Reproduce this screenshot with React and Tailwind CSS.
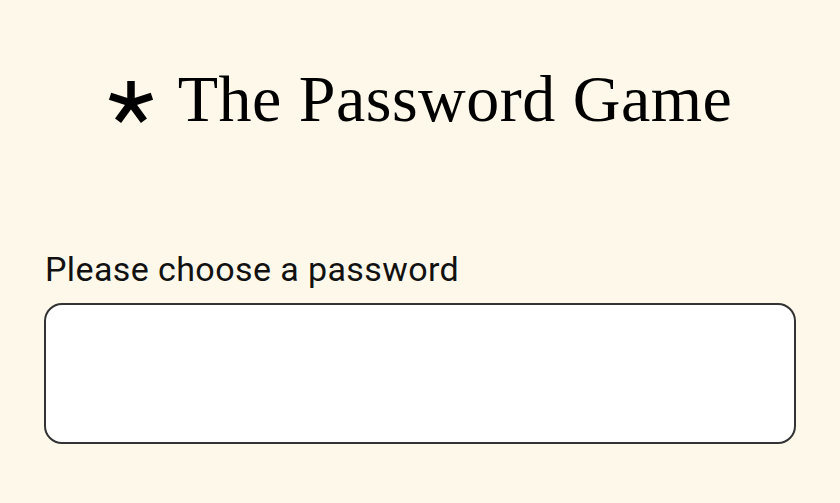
const Asterisk = () => (
  <svg width="46" height="44" viewBox="-23 -23 46 44" className="shrink-0">
    {[-90, -18, 54, 126, 198].map((a) => (
      <line
        key={a}
        x1="0"
        y1="0"
        x2={22 * Math.cos((a * Math.PI) / 180)}
        y2={22 * Math.sin((a * Math.PI) / 180)}
        stroke="#000"
        strokeWidth="7.5"
      />
    ))}
  </svg>
);

export default function App() {
  return (
    <div className="min-h-screen w-full bg-[#fdf8e9] flex flex-col items-center">
      <h1
        className="mt-[66px] flex items-start gap-[24px] text-[66px] leading-none tracking-[0.5px] text-black"
        style={{ fontFamily: '"Liberation Serif", serif' }}
      >
        <span className="mt-[14px]">
          <Asterisk />
        </span>
        <span>The Password Game</span>
      </h1>
      <div className="mt-[120px] w-[752px]">
        <label
          className="block text-[34px] leading-none tracking-[0.4px] text-[#111] ml-px"
          style={{ fontFamily: 'Roboto, sans-serif' }}
        >
          Please choose a password
        </label>
        <div className="mt-[17px] h-[141px] w-full rounded-[18px] border-2 border-[#333] bg-white" />
      </div>
    </div>
  );
}
